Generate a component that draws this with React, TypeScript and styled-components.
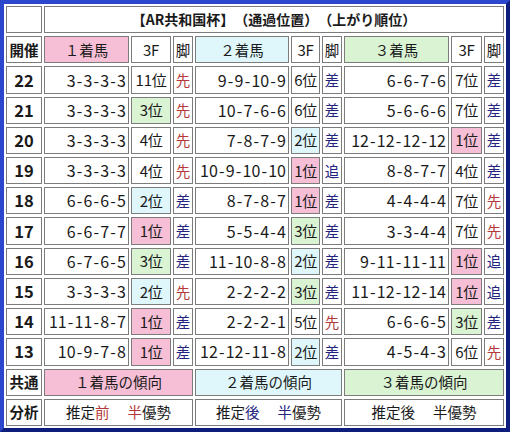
import { Fragment } from "react";
import styled, { createGlobalStyle } from "styled-components";

type Tone = "pink" | "cyan" | "green" | "white";
type Mark = "先" | "差" | "追";
type Entry = [string, string, Tone, Mark];
type Race = { year: string; horses: [Entry, Entry, Entry] };

const tones: Record<Tone, string> = {
  pink: "#f7bfd6",
  cyan: "#dff7fb",
  green: "#d9f3d3",
  white: "#ffffff",
};

const races: Race[] = [
  { year: "22", horses: [["3-3-3-3", "11位", "white", "先"], ["9-9-10-9", "6位", "white", "差"], ["6-6-7-6", "7位", "white", "差"]] },
  { year: "21", horses: [["3-3-3-3", "3位", "green", "先"], ["10-7-6-6", "6位", "white", "差"], ["5-6-6-6", "7位", "white", "差"]] },
  { year: "20", horses: [["3-3-3-3", "4位", "white", "先"], ["7-8-7-9", "2位", "cyan", "差"], ["12-12-12-12", "1位", "pink", "差"]] },
  { year: "19", horses: [["3-3-3-3", "4位", "white", "先"], ["10-9-10-10", "1位", "pink", "追"], ["8-8-7-7", "4位", "white", "差"]] },
  { year: "18", horses: [["6-6-6-5", "2位", "cyan", "差"], ["8-7-8-7", "1位", "pink", "差"], ["4-4-4-4", "7位", "white", "先"]] },
  { year: "17", horses: [["6-6-7-7", "1位", "pink", "差"], ["5-5-4-4", "3位", "green", "差"], ["3-3-4-4", "7位", "white", "先"]] },
  { year: "16", horses: [["6-7-6-5", "3位", "green", "差"], ["11-10-8-8", "2位", "cyan", "差"], ["9-11-11-11", "1位", "pink", "追"]] },
  { year: "15", horses: [["3-3-3-3", "2位", "cyan", "先"], ["2-2-2-2", "3位", "green", "差"], ["11-12-12-14", "1位", "pink", "追"]] },
  { year: "14", horses: [["11-11-8-7", "1位", "pink", "差"], ["2-2-2-1", "5位", "white", "先"], ["6-6-6-5", "3位", "green", "差"]] },
  { year: "13", horses: [["10-9-7-8", "1位", "pink", "差"], ["12-12-11-8", "2位", "cyan", "差"], ["4-5-4-3", "6位", "white", "先"]] },
];

const placeTones: Tone[] = ["pink", "cyan", "green"];
const placeNames = ["１着馬", "２着馬", "３着馬"];

const GlobalStyle = createGlobalStyle`
  body {
    margin: 0;
    background: #ffffff;
    font-family: "Noto Sans CJK JP", "Noto Sans", sans-serif;
  }
`;

const Board = styled.div`
  box-sizing: border-box;
  width: 510px;
  height: 432px;
  padding: 2px;
  background: #ffffff;
  border: 4px solid;
  border-color: #2c46cc #0f1d7c #0f1d7c #2c46cc;
  display: grid;
  grid-template-columns: 36px 85px 40px 20px 94px 29px 20px 105px 31px 20px;
  grid-template-rows: repeat(14, 1fr);
  column-gap: 2px;
  row-gap: 3px;
`;

const Cell = styled.div<{
  $tone?: Tone;
  $align?: "left" | "center" | "right";
  $span?: number;
  $bold?: boolean;
}>`
  box-sizing: border-box;
  display: flex;
  align-items: center;
  justify-content: ${({ $align }) =>
    $align === "right" ? "flex-end" : $align === "left" ? "flex-start" : "center"};
  grid-column: span ${({ $span }) => $span ?? 1};
  padding: 0 2px 1px;
  border: 1px solid #7c7c7c;
  background: ${({ $tone }) => tones[$tone ?? "white"]};
  color: #1a1a1a;
  font-size: 14.5px;
  font-weight: ${({ $bold }) => ($bold ? 700 : 400)};
  white-space: nowrap;
  overflow: hidden;
  text-spacing-trim: space-all;
`;

const Title = styled(Cell)`
  font-size: 14px;
`;

const Year = styled(Cell)`
  font-size: 16.5px;
  font-weight: 700;
`;

const Rank = styled(Cell)`
  font-size: 15px;
  letter-spacing: -0.3px;
`;

const Pos = styled.span`
  font-size: 16px;
`;

const Dash = styled.span`
  margin: 0 1.2px;
`;

const Leg = styled.span<{ $mark: Mark }>`
  color: ${({ $mark }) => ($mark === "先" ? "#b5393a" : "#24247e")};
`;

const Accent = styled.span<{ $red?: boolean }>`
  color: ${({ $red }) => ($red ? "#b5393a" : "#24247e")};
`;

const Gap = styled.span`
  display: inline-block;
  width: 1.25em;
`;

const Position = ({ value }: { value: string }) => (
  <Pos>
    {value.split("-").map((n, i) => (
      <Fragment key={i}>
        {i > 0 && <Dash>-</Dash>}
        {n}
      </Fragment>
    ))}
  </Pos>
);

export default function App() {
  return (
    <>
      <GlobalStyle />
      <Board>
        <Cell />
        <Title $span={9} $bold>
          【AR共和国杯】（通過位置）（上がり順位）
        </Title>

        <Cell $bold>開催</Cell>
        {placeNames.map((name, i) => (
          <Fragment key={name}>
            <Cell $tone={placeTones[i]}>{name}</Cell>
            <Rank>3F</Rank>
            <Cell>脚</Cell>
          </Fragment>
        ))}

        {races.map((race) => (
          <Fragment key={race.year}>
            <Year>{race.year}</Year>
            {race.horses.map(([pos, f3, tone, mark], i) => (
              <Fragment key={i}>
                <Cell $align="right">
                  <Position value={pos} />
                </Cell>
                <Rank $tone={tone}>{f3}</Rank>
                <Cell>
                  <Leg $mark={mark}>{mark}</Leg>
                </Cell>
              </Fragment>
            ))}
          </Fragment>
        ))}

        <Cell $bold>共通</Cell>
        {placeNames.map((name, i) => (
          <Cell key={name} $span={3} $tone={placeTones[i]}>
            {name}の傾向
          </Cell>
        ))}

        <Cell $bold>分析</Cell>
        <Cell $span={3}>
          推定<Accent $red>前</Accent>
          <Gap />
          <Accent $red>半</Accent>優勢
        </Cell>
        <Cell $span={3}>
          推定<Accent>後</Accent>
          <Gap />
          <Accent>半</Accent>優勢
        </Cell>
        <Cell $span={3}>
          推定後
          <Gap />
          半優勢
        </Cell>
      </Board>
    </>
  );
}
